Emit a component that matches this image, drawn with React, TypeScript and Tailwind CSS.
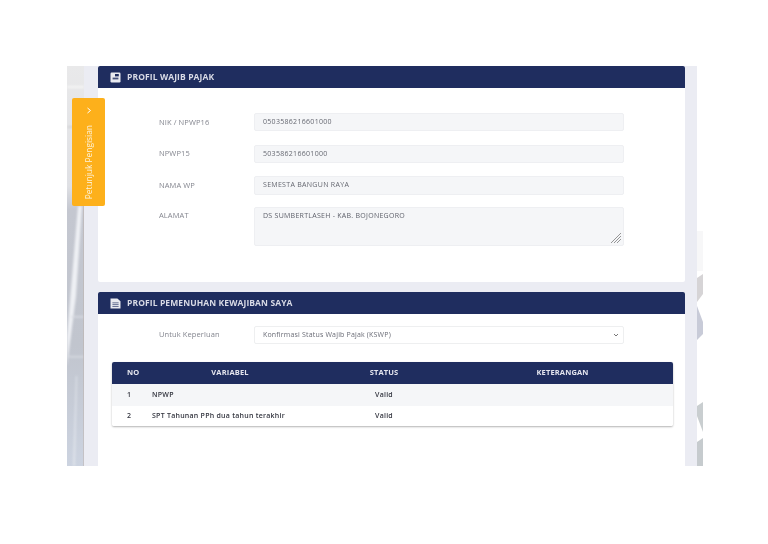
import React from "react";

const fields = [
  { label: "NIK / NPWP16", value: "0503586216601000", h: "h-[18px]", mb: "mb-[14px]", nudge: "pt-[1px]" },
  { label: "NPWP15", value: "503586216601000", h: "h-[18px]", mb: "mb-[13px]", nudge: "" },
  { label: "NAMA WP", value: "SEMESTA BANGUN RAYA", h: "h-[19px]", mb: "mb-[12px]", nudge: "" },
];

function LeftStrip() {
  return (
    <svg className="w-[17px] h-full shrink-0" viewBox="0 0 17 400" preserveAspectRatio="none">
      <defs>
        <linearGradient id="ls" x1="0" y1="0" x2="0" y2="1">
          <stop offset="0" stopColor="#e9e9ea" />
          <stop offset="0.3" stopColor="#dfe0e4" />
          <stop offset="0.36" stopColor="#c4c7d0" />
          <stop offset="0.7" stopColor="#c1c5ce" />
          <stop offset="1" stopColor="#ccd3e0" />
        </linearGradient>
        <filter id="sb">
          <feGaussianBlur stdDeviation="0.9" />
        </filter>
      </defs>
      <rect width="17" height="400" fill="url(#ls)" />
      <g filter="url(#sb)">
        <path d="M11 140 L15 140 L9 230 L0 300 L0 270 Z" fill="#eef0f4" />
        <path d="M6 400 L9 310 L10 310 L8 400 Z" fill="#dfe3ea" />
        <rect x="0" y="20" width="17" height="2" fill="#f5f5f5" />
        <rect x="0" y="60" width="10" height="2" fill="#d3d3d6" />
        <rect x="4" y="250" width="13" height="1.5" fill="#d9dce3" />
        <rect x="2" y="290" width="15" height="1.5" fill="#d8dbe2" />
      </g>
      <rect x="16.2" y="140" width="0.8" height="260" fill="#b9a9a0" opacity="0.5" />
    </svg>
  );
}

function RightStrip() {
  return (
    <svg className="w-[6px] h-full shrink-0" viewBox="0 0 6 400" preserveAspectRatio="none">
      <defs>
        <filter id="rb">
          <feGaussianBlur stdDeviation="0.6" />
        </filter>
      </defs>
      <rect width="6" height="400" fill="#ffffff" />
      <rect y="165" width="6" height="40" fill="#f7f7f8" />
      <g filter="url(#rb)">
        <path d="M0 212 L6 208 L6 228 L0 236 Z" fill="#d6d4d6" />
        <path d="M0 240 L6 256 L6 268 L0 274 Z" fill="#c8cbd8" />
        <path d="M0 340 L6 336 L6 366 L0 350 Z" fill="#c9ced0" />
        <path d="M0 376 L6 372 L6 400 L0 400 Z" fill="#c6cbce" />
      </g>
    </svg>
  );
}

function IconProfile() {
  return (
    <svg width="11" height="11" viewBox="0 0 11 11" className="shrink-0">
      <rect x="0.5" y="0.5" width="10" height="10" rx="1.2" fill="#e9eaf0" />
      <path d="M5 2 L8.8 2 L8.8 4.4 L5 4.4 Z" fill="#1f2d5f" />
      <rect x="2.6" y="5.6" width="5.8" height="1.8" fill="#1f2d5f" opacity="0.8" />
    </svg>
  );
}

function IconDoc() {
  return (
    <svg width="11" height="11" viewBox="0 0 11 11" className="shrink-0">
      <path d="M0.5 0.5 H7.4 L10.5 3.2 V10.5 H0.5 Z" fill="#e9eaf0" />
      <rect x="2.4" y="4.4" width="6.2" height="0.9" fill="#1f2d5f" opacity="0.7" />
      <rect x="2.4" y="6.2" width="6.2" height="0.9" fill="#1f2d5f" opacity="0.7" />
      <rect x="2.4" y="8" width="6.2" height="0.9" fill="#1f2d5f" opacity="0.7" />
    </svg>
  );
}

function CardHeader({ icon, title }: { icon: React.ReactNode; title: string }) {
  return (
    <div className="h-[22px] bg-[#1f2d5f] rounded-t-[2px] flex items-center pl-[12px] gap-[6px]">
      {icon}
      <span className="text-[8.5px] font-bold text-[#d9dbe6] tracking-[0.1px]">{title}</span>
    </div>
  );
}

const labelCls = "w-[95px] text-[7.5px] tracking-[0.1px] text-[#84868f] whitespace-nowrap";
const gridCols = "grid grid-cols-[40px_156px_152px_213px] items-center";

export default function App() {
  return (
    <div
      className="relative w-[768px] h-[544px] bg-white overflow-hidden pt-[66px] pl-[67px]"
      style={{ fontFamily: '"Open Sans", "Liberation Sans", sans-serif' }}
    >
      <div className="flex h-[400px] w-[636px]">
        <LeftStrip />
        <div className="w-[613px] bg-[#ebecf3] pl-[14px] pr-[12px] overflow-hidden blur-[0.45px]">
          <section className="bg-white h-[216px] rounded-b-[2px]">
            <CardHeader icon={<IconProfile />} title="PROFIL WAJIB PAJAK" />
            <div className="pt-[25px] pl-[61px] pr-[61px]">
              {fields.map((f) => (
                <div key={f.label} className={`flex items-center ${f.mb}`}>
                  <span className={`${labelCls} ${f.nudge}`}>{f.label}</span>
                  <div className={`flex-1 ${f.h} ${f.nudge} bg-[#f5f6f8] border border-[#eeeff2] rounded-[2px] flex items-center pl-[8px] text-[7px] tracking-[0.3px] text-[#666871]`}>
                    {f.value}
                  </div>
                </div>
              ))}
              <div className="flex items-start">
                <span className={`${labelCls} pt-[3px]`}>ALAMAT</span>
                <div className="relative flex-1 h-[39px] bg-[#f5f6f8] border border-[#eeeff2] rounded-[2px] pl-[8px] pt-[3px] text-[7px] tracking-[0.27px] text-[#5f616b]">
                  DS SUMBERTLASEH - KAB. BOJONEGORO
                  <svg width="12" height="12" viewBox="0 0 12 12" className="absolute right-[1px] bottom-[1px]">
                    <path d="M1 11 L11 1 M4 11 L11 4 M7 11 L11 7" stroke="#8a8a8a" strokeWidth="0.9" />
                  </svg>
                </div>
              </div>
            </div>
          </section>

          <section className="mt-[10px] bg-white h-[174px]">
            <CardHeader icon={<IconDoc />} title="PROFIL PEMENUHAN KEWAJIBAN SAYA" />
            <div className="pt-[12px] pl-[61px] pr-[61px]">
              <div className="flex items-center">
                <span className={labelCls}>Untuk Keperluan</span>
                <div className="flex-1 h-[18px] bg-white border border-[#eeeff0] rounded-[2px] flex items-center justify-between pl-[8px] pr-[4px] text-[7px] tracking-[0.18px] text-[#6a6c76]">
                  <span>Konfirmasi Status Wajib Pajak (KSWP)</span>
                  <svg width="6" height="4" viewBox="0 0 6 4">
                    <path d="M1 1 L3 3 L5 1" fill="none" stroke="#777" strokeWidth="1" />
                  </svg>
                </div>
              </div>
            </div>
            <div className="mt-[18px] ml-[14px] mr-[12px] rounded-[2px] shadow-[0_1px_2px_rgba(0,0,0,0.3)] overflow-hidden">
              <div className={`h-[22px] bg-[#1f2d5f] ${gridCols} text-[7.5px] font-bold tracking-[0.15px] text-[#e4e5ee]`}>
                <span className="pl-[15px]">NO</span>
                <span className="text-center">VARIABEL</span>
                <span className="text-center">STATUS</span>
                <span className="text-center pr-[8px]">KETERANGAN</span>
              </div>
              <div className={`h-[22px] pt-[1px] bg-[#f5f6f8] ${gridCols} text-[7px] font-semibold tracking-[0.25px] text-[#33353f]`}>
                <span className="pl-[15px]">1</span>
                <span className="whitespace-nowrap">NPWP</span>
                <span className="text-center">Valid</span>
                <span />
              </div>
              <div className={`h-[20px] bg-white ${gridCols} text-[7px] font-semibold tracking-[0.25px] text-[#33353f]`}>
                <span className="pl-[15px]">2</span>
                <span className="whitespace-nowrap">SPT Tahunan PPh dua tahun terakhir</span>
                <span className="text-center">Valid</span>
                <span />
              </div>
            </div>
          </section>
        </div>
        <RightStrip />
      </div>

      <div className="absolute left-[72px] top-[98px] w-[33px] h-[108px] bg-[#fdb01b] rounded-[2px] flex flex-col items-center blur-[0.3px]">
        <svg width="6" height="7" viewBox="0 0 6 7" className="mt-[9px] shrink-0">
          <path d="M1.5 1 L4.5 3.5 L1.5 6" fill="none" stroke="#fff" strokeWidth="1" />
        </svg>
        <span className="mt-[11px] text-[8.4px] leading-[12px] text-[#fdf3dc] whitespace-nowrap [writing-mode:vertical-rl] rotate-180">
          Petunjuk Pengisian
        </span>
      </div>
    </div>
  );
}
